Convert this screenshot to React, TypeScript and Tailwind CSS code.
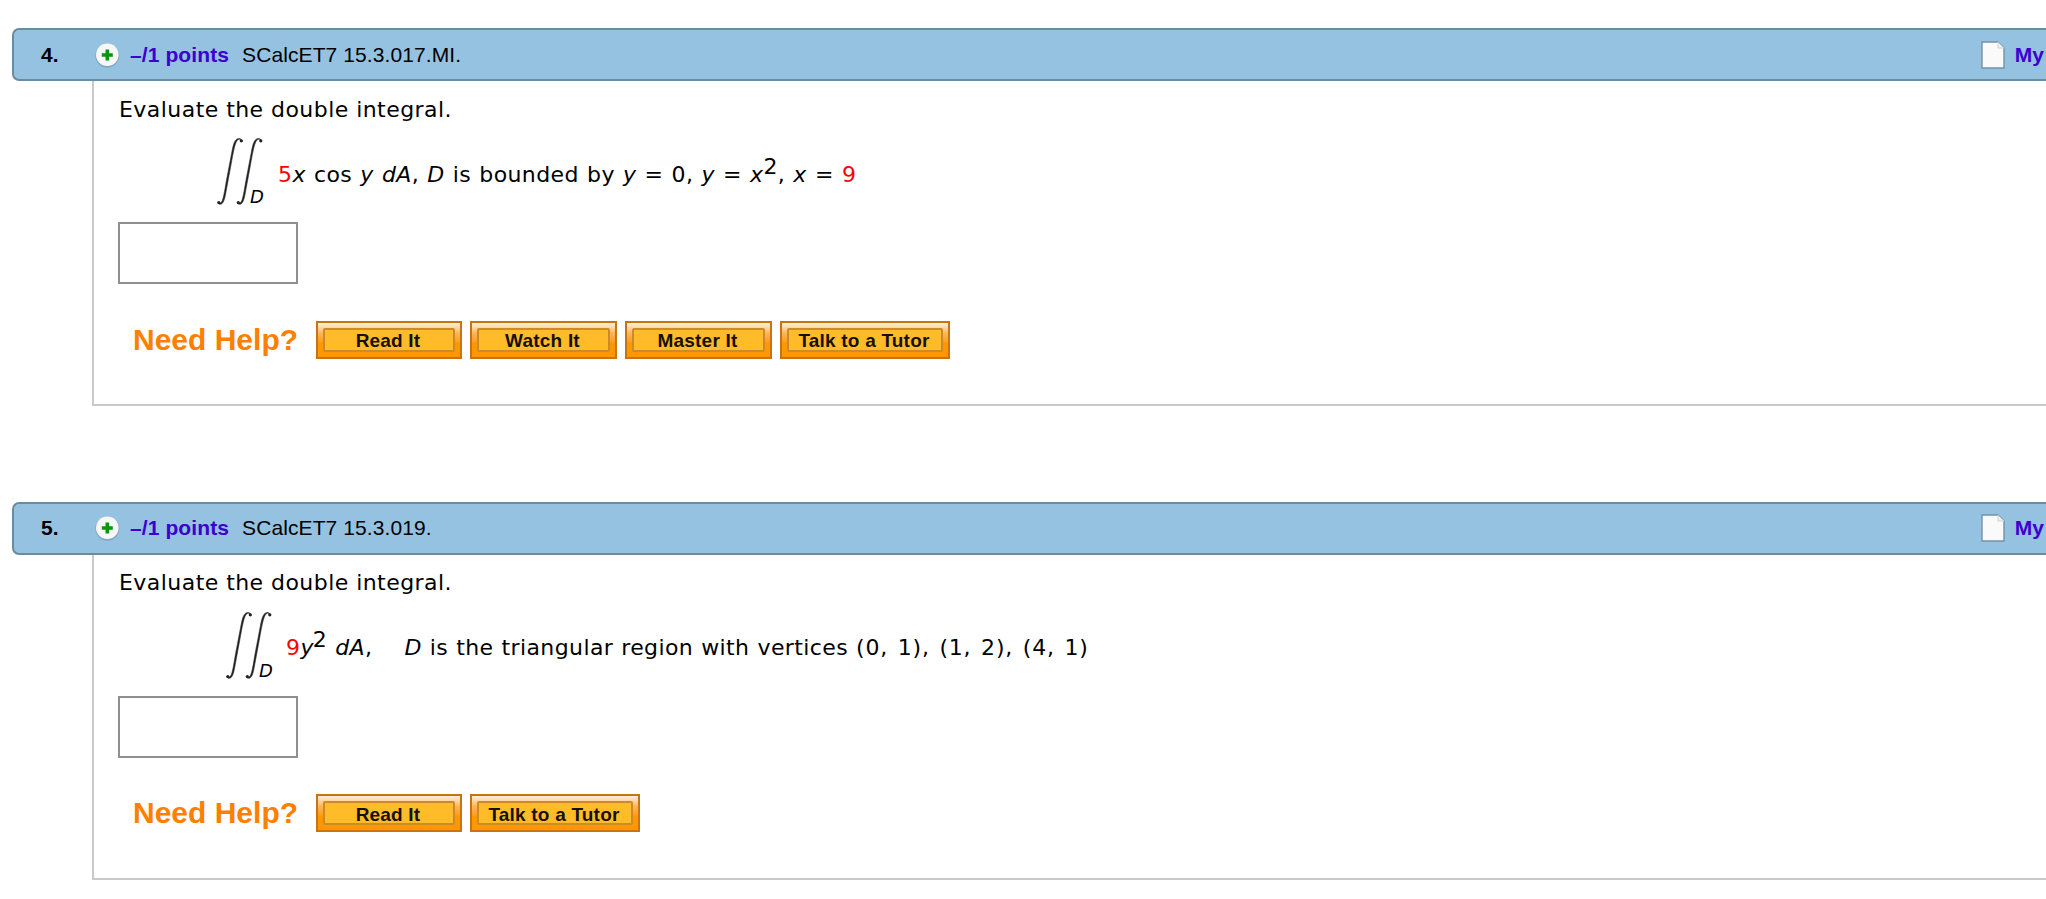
import type { ReactNode } from 'react'

interface QuestionProps {
    number: number
    code: string
    buttons: string[]
    children: ReactNode
}

function PlusBadge() {
    return (
        <svg width="26" height="28" viewBox="0 0 26 28" className="shrink-0">
            <circle cx="13.3" cy="14.8" r="12" fill="#6f94ad" opacity="0.55" />
            <circle cx="13.3" cy="13.8" r="11.3" fill="#f7f7f7" />
            <path d="M11.500 8.500h3.600v3.700h3.700v3.600h-3.700v3.700h-3.600v-3.700H7.800v-3.600h3.700z" fill="#0a960a" />
        </svg>
    )
}

function PageIcon() {
    return (
        <svg width="24" height="28" viewBox="0 0 24 28" className="shrink-0">
            <path d="M1 1h16l6 6v20H1z" fill="#fafafa" stroke="#7392a6" strokeWidth="1.4" />
            <path d="M17 1v6h6" fill="#eef1f3" stroke="#cbd4da" strokeWidth="1" />
        </svg>
    )
}

function DoubleIntegral() {
    const stroke = 'M25 3.5C24.5 1 21.5 .2 19.8 3C17.5 7 16.2 15 14 27L9.2 53C8 60 7 64.500 4.500 66C3 66.800 1.500 66.300 1 64.500C2.500 66 4.500 65 5.500 62C7.500 56 8.500 46 11 34L15 13C16.500 5 18 1 21.500 .4C23.500 .2 25 1.500 25 3.500z'
    return (
        <svg width="47" height="68" viewBox="0 0 47 68" className="shrink-0">
            {[0, 19.5].map((x) => (
                <g key={x} transform={`translate(${x} 0)`} fill="#222">
                    <path d={stroke} stroke="#222" strokeWidth="0.5" />
                    <circle cx="24.3" cy="2.8" r="1.6" />
                    <circle cx="1.8" cy="64.6" r="1.6" />
                </g>
            ))}
        </svg>
    )
}

function HelpButton({ label }: { label: string }) {
    const wide = label.length > 10
    return (
        <button
            className={`h-[38px] shrink-0 border-2 border-[#c87414] bg-linear-to-b from-[#fff0dc] from-0% via-[#ffb554] via-30% to-[#ff9800] to-60% p-[5px] ${wide ? 'w-[170px]' : 'w-[147px] first:w-[146px]'}`}
        >
            <span className="flex h-full items-center justify-center rounded-[2px] border-2 border-[#cb8b28] bg-[#ffbc28] pt-0.5 pr-0.5 text-[19px] leading-none font-bold tracking-[0.2px] whitespace-nowrap text-[#171000]">
                {label}
            </span>
        </button>
    )
}

function Question({ number, code, buttons, children }: QuestionProps) {
    return (
        <section className="h-[473.5px]">
            <header className="ml-3 flex h-[53px] items-center rounded-l-[7px] border-2 border-r-0 border-[#6b8c9f] bg-[#96c2e1] text-[21px] leading-none">
                <span className="w-20 pb-px pl-[27px] font-bold">{number}.</span>
                <PlusBadge />
                <a className="ml-[10px] pb-px font-bold tracking-[0.1px] text-[#3c00cf]">–/1 points</a>
                <span className="ml-[13px] pb-px tracking-[0.1px]">{code}</span>
                <span className="mr-0.5 ml-auto flex items-center gap-[10px] font-bold text-[#3c00cf]">
                    <PageIcon />
                    <span className="pb-px">My</span>
                </span>
            </header>
            <div className="ml-[92px] h-[325px] border-b-2 border-l-2 border-[#c9c9c9] pl-6">
                <p className="h-[57px] pt-[14.5px] pl-px font-['DejaVu_Sans',sans-serif] text-[22px] leading-7 tracking-[0.45px]">
                    Evaluate the double integral.
                </p>
                <div className="flex h-[68px] font-['DejaVu_Sans',sans-serif] text-[22px] leading-7 whitespace-pre">
                    {children}
                </div>
                <input className="mt-4 block h-[62px] w-[180px] border-2 border-[#8f8f8f] bg-white" />
                <div className="mt-[36.5px] flex items-center pl-[15px]">
                    <span className="w-[183px] text-[30px] leading-9 font-bold text-[#ff7f00]">Need Help?</span>
                    <div className="flex gap-2">
                        {buttons.map((label) => (
                            <HelpButton key={label} label={label} />
                        ))}
                    </div>
                </div>
            </div>
        </section>
    )
}

function Subscript({ children }: { children: ReactNode }) {
    return <i className="-ml-[14px] w-7 self-end text-[18px] leading-[18px]">{children}</i>
}

export default function App() {
    return (
        <main className="h-[899px] overflow-hidden bg-white pt-7 font-['Liberation_Sans',Arial,sans-serif] text-black">
            <Question number={4} code="SCalcET7 15.3.017.MI." buttons={['Read It', 'Watch It', 'Master It', 'Talk to a Tutor']}>
                <div className="ml-[99px] flex">
                    <DoubleIntegral />
                    <Subscript>D</Subscript>
                </div>
                <p className="pt-[22.5px] tracking-[0.4px] [word-spacing:0.75px]">
                    <span className="text-[#ff0000]">5</span><i>x</i> cos <i>y</i> <i>dA</i>, <i>D</i> is bounded by <i>y</i> = 0, <i>y</i> = <i>x</i>
                    <span className="relative -top-2">2</span>, <i>x</i> = <span className="text-[#ff0000]">9</span>
                </p>
            </Question>
            <Question number={5} code="SCalcET7 15.3.019." buttons={['Read It', 'Talk to a Tutor']}>
                <div className="ml-[108px] flex">
                    <DoubleIntegral />
                    <Subscript>D</Subscript>
                </div>
                <p className="-ml-px pt-[22.5px] tracking-[0.4px] [word-spacing:0.6px]">
                    <span className="text-[#ff0000]">9</span><i>y</i>
                    <span className="relative -top-2 -ml-px">2</span> <i>dA</i>,<i className="ml-8">D</i> is the triangular region with vertices{' '}
                    <span className="tracking-[0.8px] [word-spacing:1.9px]">(0, 1), (1, 2), (4, 1)</span>
                </p>
            </Question>
        </main>
    )
}
